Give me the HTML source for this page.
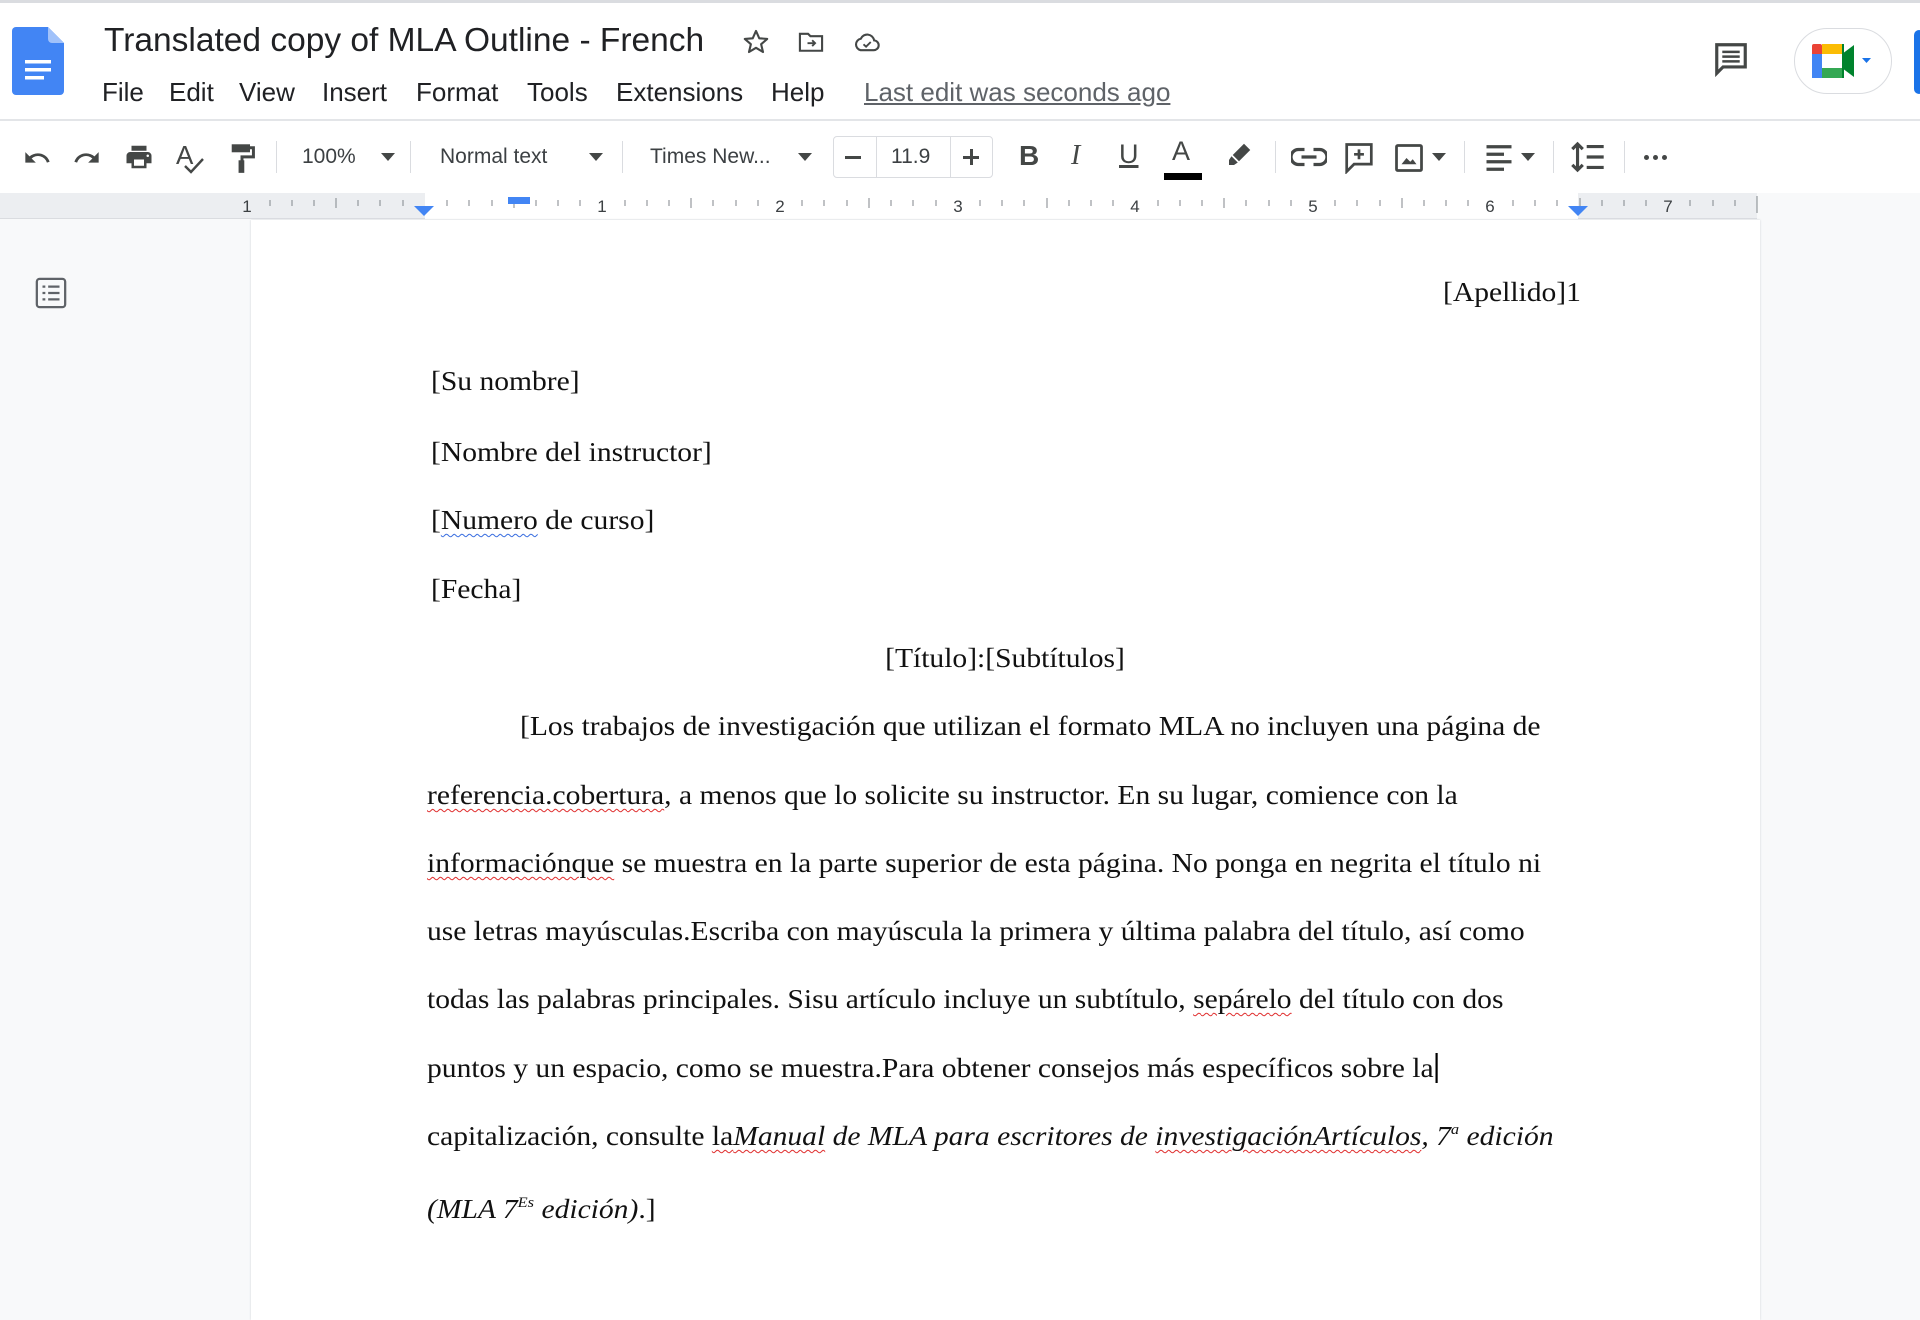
<!DOCTYPE html>
<html><head><meta charset="utf-8"><style>
*{margin:0;padding:0;box-sizing:border-box}
body{width:1920px;height:1268px;overflow:hidden;background:#f8f9fa;font-family:"Liberation Sans",Arial,sans-serif;position:relative;color:#202124}
.a{position:absolute;white-space:nowrap}
#hdr{position:absolute;left:0;top:0;width:1920px;height:121px;background:#fff;border-top:3px solid #dadce0;border-bottom:2px solid #e3e5e8}
#tb{position:absolute;left:0;top:121px;width:1920px;height:72px;background:#fff}
.menu{font-size:26px;color:#202124;top:77px}
.sep{position:absolute;top:141px;width:1px;height:32px;background:#dadce0}
.tt{font-size:21px;color:#3c4043;top:145px}
#ruler{position:absolute;left:0;top:193px;width:1920px;height:26px;background:#eceef1;border-bottom:1px solid #dadce0}
#page{position:absolute;left:251px;top:220px;width:1509px;height:1100px;background:#fff;box-shadow:0 0 2px #cfd2d6}
.d{font-family:"Liberation Serif","Times New Roman",serif;font-size:27px;color:#111;position:absolute;white-space:nowrap;transform:scaleX(1.095);transform-origin:0 0}
.r{text-decoration:underline wavy #e03030;text-decoration-thickness:1px;text-underline-offset:4px}
.b{text-decoration:underline wavy #3b6fe0;text-decoration-thickness:1px;text-underline-offset:4px}
sup{font-size:15px;vertical-align:11px}
</style></head><body>
<div id="hdr"></div>
<svg class="a" style="left:12px;top:27px" width="52" height="68" viewBox="0 0 52 68"><path d="M4 0h32l16 16v48a4 4 0 0 1-4 4H4a4 4 0 0 1-4-4V4a4 4 0 0 1 4-4z" fill="#4285f4"/><path d="M36 0v12a4 4 0 0 0 4 4h12z" fill="#a1c2fa"/><rect x="13" y="33" width="26" height="3.5" fill="#fff"/><rect x="13" y="41" width="26" height="3.5" fill="#fff"/><rect x="13" y="49" width="19" height="3.5" fill="#fff"/></svg>
<div class="a" style="left:104px;top:22px;font-size:33.5px;color:#202124">Translated copy of MLA Outline - French</div>
<svg class="a" style="left:742px;top:28px" width="28" height="28" viewBox="0 0 24 24"><path d="M12 2.5l2.8 6.3 6.8.6-5.2 4.5 1.6 6.7L12 17l-6 3.6 1.6-6.7-5.2-4.5 6.8-.6z" fill="none" stroke="#444746" stroke-width="1.8" stroke-linejoin="round"/></svg>
<svg class="a" style="left:796px;top:28px" width="30" height="28" viewBox="0 0 24 24"><path d="M2.5 5h7l2 2h10v12.5h-19z" fill="none" stroke="#444746" stroke-width="1.8"/><path d="M9 13h6M13 10.5l2.5 2.5-2.5 2.5" fill="none" stroke="#444746" stroke-width="1.6"/></svg>
<svg class="a" style="left:851px;top:28px" width="32" height="28" viewBox="0 0 24 24"><path d="M6.5 19h11a4.2 4.2 0 0 0 .6-8.4A6 6 0 0 0 6.7 9.2 5 5 0 0 0 6.5 19z" fill="none" stroke="#444746" stroke-width="1.8"/><path d="M9 14l2.2 2 4-4" fill="none" stroke="#444746" stroke-width="1.6"/></svg>
<div class="a menu" style="left:102px">File</div>
<div class="a menu" style="left:169px">Edit</div>
<div class="a menu" style="left:239px">View</div>
<div class="a menu" style="left:322px">Insert</div>
<div class="a menu" style="left:416px">Format</div>
<div class="a menu" style="left:527px">Tools</div>
<div class="a menu" style="left:616px">Extensions</div>
<div class="a menu" style="left:771px">Help</div>
<div class="a menu" style="left:864px;color:#5f6368;text-decoration:underline">Last edit was seconds ago</div>
<svg class="a" style="left:1712px;top:40px" width="38" height="38" viewBox="0 0 24 24"><path d="M3 3h18v14H7l-4 4z" fill="none" stroke="#444746" stroke-width="2"/><path d="M6.5 7.5h11M6.5 10.5h11M6.5 13.5h11" stroke="#444746" stroke-width="1.6"/></svg>
<div class="a" style="left:1794px;top:28px;width:98px;height:66px;border:1px solid #dadce0;border-radius:33px;background:#fff"></div>
<svg class="a" style="left:1812px;top:44px" width="62" height="34" viewBox="0 0 62 34"><rect x="0" y="0" width="10" height="34" rx="2" fill="#ea4335"/><rect x="10" y="0" width="20" height="10" fill="#fbbc04"/><rect x="10" y="24" width="20" height="10" fill="#34a853"/><rect x="0" y="10" width="10" height="24" fill="#4285f4"/><rect x="10" y="10" width="20" height="14" fill="#fff"/><path d="M30 0h2v34h-2zM30 10l12-9v32l-12-9z" fill="#00832d"/><path d="M50 14h9l-4.5 5z" fill="#1a73e8"/></svg>
<div class="a" style="left:1914px;top:30px;width:10px;height:64px;background:#1a73e8;border-radius:6px"></div>

<div id="tb"></div>
<svg class="a" style="left:22px;top:144px" width="30" height="28" viewBox="0 0 24 24"><path d="M12.5 8c-2.6 0-5 1-6.9 2.6L2 7v9h9l-3.6-3.6A8 8 0 0 1 20.5 16l2.3-.8A10.5 10.5 0 0 0 12.5 8z" fill="#444746"/></svg>
<svg class="a" style="left:72px;top:144px" width="30" height="28" viewBox="0 0 24 24"><path d="M11.5 8c2.6 0 5 1 6.9 2.6L22 7v9h-9l3.6-3.6A8 8 0 0 0 3.5 16l-2.3-.8A10.5 10.5 0 0 1 11.5 8z" fill="#444746"/></svg>
<svg class="a" style="left:123px;top:142px" width="32" height="30" viewBox="0 0 24 24"><path d="M19 8H5a3 3 0 0 0-3 3v6h4v4h12v-4h4v-6a3 3 0 0 0-3-3zm-3 11H8v-5h8zm3-7a1 1 0 1 1 0-2 1 1 0 0 1 0 2zM18 3H6v4h12z" fill="#444746"/></svg>
<div class="a" style="left:176px;top:140px;font-size:26px;color:#444746">A</div>
<svg class="a" style="left:183px;top:156px" width="22" height="20" viewBox="0 0 22 20"><path d="M2 10l6 6L20 3" fill="none" stroke="#444746" stroke-width="2.4"/></svg>
<svg class="a" style="left:228px;top:142px" width="28" height="32" viewBox="0 0 24 28"><path d="M19 5h3v8h-10v4" fill="none" stroke="#444746" stroke-width="2.6"/><rect x="9" y="16" width="5" height="11" fill="#444746"/><rect x="3" y="2" width="16" height="7" fill="#444746"/></svg>
<div class="sep" style="left:276px"></div>
<div class="a tt" style="left:302px">100%</div>
<svg class="a" style="left:381px;top:153px" width="14" height="8"><path d="M0 0h14L7 8z" fill="#444746"/></svg>
<div class="sep" style="left:410px"></div>
<div class="a tt" style="left:440px">Normal text</div>
<svg class="a" style="left:589px;top:153px" width="14" height="8"><path d="M0 0h14L7 8z" fill="#444746"/></svg>
<div class="sep" style="left:622px"></div>
<div class="a tt" style="left:650px">Times New...</div>
<svg class="a" style="left:798px;top:153px" width="14" height="8"><path d="M0 0h14L7 8z" fill="#444746"/></svg>
<div class="a" style="left:833px;top:136px;width:160px;height:42px;border:1px solid #dadce0;border-radius:4px"></div>
<div class="a" style="left:876px;top:137px;width:1px;height:40px;background:#dadce0"></div>
<div class="a" style="left:950px;top:137px;width:1px;height:40px;background:#dadce0"></div>
<div class="a" style="left:845px;top:156px;width:16px;height:3px;background:#444746"></div>
<div class="a tt" style="left:891px">11.9</div>
<div class="a" style="left:963px;top:156px;width:16px;height:3px;background:#444746"></div>
<div class="a" style="left:970px;top:149px;width:3px;height:16px;background:#444746"></div>
<div class="a" style="left:1019px;top:140px;font-size:28px;font-weight:bold;color:#444746">B</div>
<div class="a" style="left:1071px;top:140px;font-size:28px;font-style:italic;font-family:'Liberation Serif',serif;color:#444746">I</div>
<div class="a" style="left:1119px;top:139px;font-size:27px;text-decoration:underline;text-decoration-thickness:3px;color:#444746">U</div>
<div class="a" style="left:1172px;top:136px;font-size:27px;color:#444746">A</div>
<div class="a" style="left:1164px;top:173px;width:38px;height:7px;background:#000"></div>
<svg class="a" style="left:1224px;top:140px" width="30" height="30" viewBox="0 0 24 24"><path d="M16 3l5 5-9 9-5-5zM6 13l5 5-3 2H4v-4z" fill="#444746"/></svg>
<div class="sep" style="left:1275px"></div>
<svg class="a" style="left:1291px;top:144px" width="36" height="26" viewBox="0 0 24 16"><path d="M9 3H5a5 5 0 0 0 0 10h4M15 3h4a5 5 0 0 1 0 10h-4M7 8h10" fill="none" stroke="#444746" stroke-width="2.2"/></svg>
<svg class="a" style="left:1344px;top:142px" width="30" height="32" viewBox="0 0 24 26"><path d="M2 2h20v16H8l-6 6z" fill="none" stroke="#444746" stroke-width="2.2"/><path d="M12 6v8M8 10h8" stroke="#444746" stroke-width="2.2"/></svg>
<svg class="a" style="left:1394px;top:143px" width="30" height="30" viewBox="0 0 24 24"><rect x="2" y="2" width="20" height="20" rx="1" fill="none" stroke="#444746" stroke-width="2.2"/><path d="M6 17l4-5 3 3 2-2 3 4z" fill="#444746"/></svg>
<svg class="a" style="left:1432px;top:153px" width="14" height="8"><path d="M0 0h14L7 8z" fill="#444746"/></svg>
<div class="sep" style="left:1464px"></div>
<svg class="a" style="left:1484px;top:144px" width="30" height="28" viewBox="0 0 24 22"><path d="M2 2h20M2 8h14M2 14h20M2 20h14" stroke="#444746" stroke-width="2.6"/></svg>
<svg class="a" style="left:1521px;top:153px" width="14" height="8"><path d="M0 0h14L7 8z" fill="#444746"/></svg>
<div class="sep" style="left:1553px"></div>
<svg class="a" style="left:1571px;top:141px" width="34" height="32" viewBox="0 0 26 24"><path d="M5 2v20M1 6l4-4 4 4M1 18l4 4 4-4M12 4h13M12 12h13M12 20h13" fill="none" stroke="#444746" stroke-width="2.4"/></svg>
<div class="sep" style="left:1624px"></div>
<div class="a" style="left:1644px;top:155px;width:5px;height:5px;border-radius:3px;background:#444746;box-shadow:9px 0 #444746,18px 0 #444746"></div>

<div id="ruler">
<div class="a" style="left:425px;top:0;width:1153px;height:26px;background:#fff"></div>
<div class="a" style="left:1757px;top:0;width:163px;height:26px;background:#f8f9fa"></div>
<svg class="a" style="left:0;top:0" width="1920" height="26">
<g stroke="#80868b" stroke-width="1">
<line x1="270" y1="7" x2="270" y2="13"/><line x1="292" y1="7" x2="292" y2="13"/><line x1="314" y1="7" x2="314" y2="13"/><line x1="336" y1="5" x2="336" y2="15"/><line x1="358" y1="7" x2="358" y2="13"/><line x1="380" y1="7" x2="380" y2="13"/><line x1="403" y1="7" x2="403" y2="13"/>
<line x1="447" y1="7" x2="447" y2="13"/><line x1="469" y1="7" x2="469" y2="13"/><line x1="492" y1="7" x2="492" y2="13"/><line x1="514" y1="5" x2="514" y2="15"/><line x1="536" y1="7" x2="536" y2="13"/><line x1="558" y1="7" x2="558" y2="13"/><line x1="580" y1="7" x2="580" y2="13"/>
<line x1="625" y1="7" x2="625" y2="13"/><line x1="647" y1="7" x2="647" y2="13"/><line x1="669" y1="7" x2="669" y2="13"/><line x1="691" y1="5" x2="691" y2="15"/><line x1="713" y1="7" x2="713" y2="13"/><line x1="736" y1="7" x2="736" y2="13"/><line x1="758" y1="7" x2="758" y2="13"/>
<line x1="802" y1="7" x2="802" y2="13"/><line x1="824" y1="7" x2="824" y2="13"/><line x1="847" y1="7" x2="847" y2="13"/><line x1="869" y1="5" x2="869" y2="15"/><line x1="891" y1="7" x2="891" y2="13"/><line x1="913" y1="7" x2="913" y2="13"/><line x1="936" y1="7" x2="936" y2="13"/>
<line x1="980" y1="7" x2="980" y2="13"/><line x1="1002" y1="7" x2="1002" y2="13"/><line x1="1024" y1="7" x2="1024" y2="13"/><line x1="1047" y1="5" x2="1047" y2="15"/><line x1="1069" y1="7" x2="1069" y2="13"/><line x1="1091" y1="7" x2="1091" y2="13"/><line x1="1113" y1="7" x2="1113" y2="13"/>
<line x1="1158" y1="7" x2="1158" y2="13"/><line x1="1180" y1="7" x2="1180" y2="13"/><line x1="1202" y1="7" x2="1202" y2="13"/><line x1="1224" y1="5" x2="1224" y2="15"/><line x1="1246" y1="7" x2="1246" y2="13"/><line x1="1269" y1="7" x2="1269" y2="13"/><line x1="1291" y1="7" x2="1291" y2="13"/>
<line x1="1335" y1="7" x2="1335" y2="13"/><line x1="1357" y1="7" x2="1357" y2="13"/><line x1="1380" y1="7" x2="1380" y2="13"/><line x1="1402" y1="5" x2="1402" y2="15"/><line x1="1424" y1="7" x2="1424" y2="13"/><line x1="1446" y1="7" x2="1446" y2="13"/><line x1="1468" y1="7" x2="1468" y2="13"/>
<line x1="1513" y1="7" x2="1513" y2="13"/><line x1="1535" y1="7" x2="1535" y2="13"/><line x1="1557" y1="7" x2="1557" y2="13"/><line x1="1580" y1="5" x2="1580" y2="15"/><line x1="1602" y1="7" x2="1602" y2="13"/><line x1="1624" y1="7" x2="1624" y2="13"/><line x1="1646" y1="7" x2="1646" y2="13"/>
<line x1="1690" y1="7" x2="1690" y2="13"/><line x1="1713" y1="7" x2="1713" y2="13"/><line x1="1735" y1="7" x2="1735" y2="13"/><line x1="1757" y1="3" x2="1757" y2="20"/>
</g>
<g font-family="Liberation Sans" font-size="17" fill="#3c4043" text-anchor="middle">
<text x="247" y="19">1</text><text x="602" y="19">1</text><text x="780" y="19">2</text><text x="958" y="19">3</text><text x="1135" y="19">4</text><text x="1313" y="19">5</text><text x="1490" y="19">6</text><text x="1668" y="19">7</text></g>
<path d="M414 13h20l-10 10z" fill="#4285f4"/><path d="M1568 13h20l-10 10z" fill="#4285f4"/><rect x="508" y="4" width="22" height="7" fill="#4285f4"/>
</svg>
</div>

<svg class="a" style="left:34px;top:276px" width="34" height="34" viewBox="0 0 24 24"><rect x="2" y="2" width="20" height="20" rx="2" fill="none" stroke="#5f6368" stroke-width="1.6"/><path d="M6 7.5h2M10 7.5h8M6 12h2M10 12h8M6 16.5h2M10 16.5h8" stroke="#5f6368" stroke-width="1.6"/></svg>

<div id="page"></div>
<div class="d" style="left:1443px;top:277px">[Apellido]1</div>
<div class="d" style="left:431px;top:366px">[Su nombre]</div>
<div class="d" style="left:431px;top:437px">[Nombre del instructor]</div>
<div class="d" style="left:431px;top:505px">[<span class="b">Numero</span> de curso]</div>
<div class="d" style="left:431px;top:574px">[Fecha]</div>
<div class="d" style="left:0;width:2010px;text-align:center;top:643px;transform-origin:1005px 0">[Título]:[Subtítulos]</div>
<div class="d" style="left:520px;top:711px">[Los trabajos de investigación que utilizan el formato MLA no incluyen una página de</div>
<div class="d" style="left:427px;top:780px"><span class="r">referencia.cobertura</span>, a menos que lo solicite su instructor. En su lugar, comience con la</div>
<div class="d" style="left:427px;top:848px"><span class="r">informaciónque</span> se muestra en la parte superior de esta página. No ponga en negrita el título ni</div>
<div class="d" style="left:427px;top:916px">use letras mayúsculas.Escriba con mayúscula la primera y última palabra del título, así como</div>
<div class="d" style="left:427px;top:984px">todas las palabras principales. Sisu artículo incluye un subtítulo, <span class="r">sepárelo</span> del título con dos</div>
<div class="d" style="left:427px;top:1053px">puntos y un espacio, como se muestra.Para obtener consejos más específicos sobre la <span style="border-left:2px solid #000;margin-left:2px"></span></div>
<div class="d" style="left:427px;top:1121px">capitalización, consulte <span class="r">la<i>Manual</i></span><i> de MLA para escritores de <span class="r">investigaciónArtículos</span>, 7<sup>a</sup> edición</i></div>
<div class="d" style="left:427px;top:1194px"><i>(MLA 7<sup>Es</sup> edición)</i>.]</div>
</body></html>
